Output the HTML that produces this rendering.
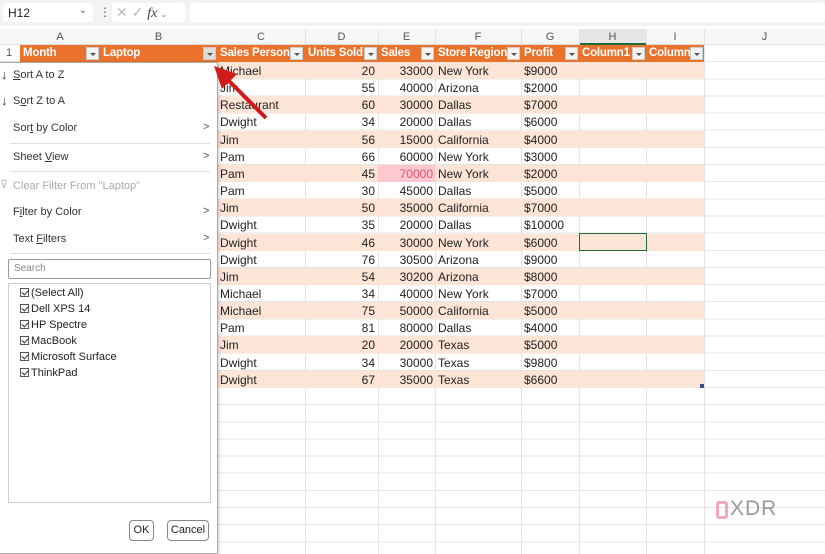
<!DOCTYPE html>
<html><head><meta charset="utf-8"><style>
*{margin:0;padding:0;box-sizing:border-box}
body{width:825px;height:554px;overflow:hidden;background:#fff;font-family:"Liberation Sans",sans-serif;font-size:12px;color:#222;position:relative}
.abs{position:absolute}
.grid{position:absolute;left:0;top:45px;width:825px;height:509px;
background-image:repeating-linear-gradient(to bottom,transparent 0,transparent 16.15px,#e3e3e3 16.15px,#e3e3e3 17.15px);}
.vl{position:absolute;top:29px;bottom:0;width:1px;background:#e3e3e3}
.colh{position:absolute;top:29px;height:16px;text-align:center;font-size:11px;color:#555;line-height:16px}
.cell{position:absolute;height:17px;line-height:18px;font-size:12px;white-space:nowrap;overflow:hidden}
.hd{position:absolute;top:45px;height:17px;line-height:17px;background:#e9722d;color:#fff;font-weight:bold;font-size:11.5px;padding-left:3px;white-space:nowrap;overflow:hidden;letter-spacing:-0.2px}
.dd{position:absolute;top:47px;width:13px;height:13px;background:#f4f4f4;border:1px solid #ccc}
.dd:after{content:"";position:absolute;left:3px;top:5px;border-left:3px solid transparent;border-right:3px solid transparent;border-top:3px solid #555}
.mi{position:absolute;left:13px;font-size:11px;color:#333}
.chev{position:absolute;left:203px;font-size:11px;color:#555}
.sep{position:absolute;left:10px;width:200px;height:1px;background:#ddd}
.cb{position:absolute;left:20px;font-size:11px;color:#222}
.cb i{display:inline-block;width:9px;height:9px;border:1px solid #555;margin-right:2px;vertical-align:-1px;position:relative}
.cb i:after{content:"";position:absolute;left:2px;top:0px;width:3px;height:5px;border-right:1.5px solid #222;border-bottom:1.5px solid #222;transform:rotate(45deg)}
</style></head><body>
<div class="abs" style="left:0;top:0;width:825px;height:26px;background:#f3f3f3"></div>
<div class="abs" style="left:3px;top:3px;width:90px;height:19px;background:#fff;border-radius:3px;font-size:12px;padding:3px 5px">H12<span style="position:absolute;right:6px;top:2px;color:#666;font-size:10px">&#8964;</span></div>
<div class="abs" style="left:99px;top:5px;color:#555;font-size:12px">&#8942;</div>
<div class="abs" style="left:112px;top:3px;width:73px;height:19px;background:#fff;border-radius:3px;color:#bbb;font-size:14px;padding:1px 4px">✕ ✓ <span style="color:#444;font-family:'Liberation Serif',serif;font-style:italic">fx</span><span style="font-size:9px;color:#888"> &#8964;</span></div>
<div class="abs" style="left:190px;top:3px;width:635px;height:19px;background:#fff;border-radius:3px"></div>
<div class="abs" style="left:0;top:26px;width:825px;height:3px;background:#fff"></div>

<div class="grid"></div>
<div class="abs" style="left:0;top:29px;width:825px;height:16px;background:#f7f7f7;border-bottom:1px solid #ddd"></div>
<div class="abs" style="left:579px;top:29px;width:67px;height:16px;background:#e6e6e6;border-bottom:2px solid #1e6b3c"></div>
<div class="vl" style="left:305px"></div><div class="vl" style="left:378px"></div><div class="vl" style="left:435px"></div><div class="vl" style="left:521px"></div><div class="vl" style="left:579px"></div><div class="vl" style="left:646px"></div><div class="vl" style="left:704px"></div>
<div class="colh" style="left:20px;width:80px">A</div><div class="colh" style="left:100px;width:117px">B</div><div class="colh" style="left:217px;width:88px">C</div><div class="colh" style="left:305px;width:73px">D</div><div class="colh" style="left:378px;width:57px">E</div><div class="colh" style="left:435px;width:86px">F</div><div class="colh" style="left:521px;width:58px">G</div><div class="colh" style="left:579px;width:67px">H</div><div class="colh" style="left:646px;width:58px">I</div><div class="colh" style="left:704px;width:121px">J</div>
<div class="abs" style="left:6px;top:47px;font-size:11px;color:#555">1</div>
<div class="hd" style="left:20px;width:684px"></div>
<div class="hd" style="left:20px">Month</div><div class="hd" style="left:100px">Laptop</div><div class="hd" style="left:217px">Sales Person</div><div class="hd" style="left:305px">Units Sold</div><div class="hd" style="left:378px">Sales</div><div class="hd" style="left:435px">Store Region</div><div class="hd" style="left:521px">Profit</div><div class="hd" style="left:579px">Column1</div><div class="hd" style="left:646px;width:46px">Column</div>
<div class="dd" style="left:86px"></div><div class="dd" style="left:203px;background:#ddd"></div><div class="dd" style="left:290px"></div><div class="dd" style="left:364px"></div><div class="dd" style="left:421px"></div><div class="dd" style="left:507px"></div><div class="dd" style="left:565px"></div><div class="dd" style="left:632px"></div><div class="dd" style="left:690px"></div>
<div id="rows"></div>
<script>
var d=[["Michael",20,33000,"New York","$9000"],["Jim",55,40000,"Arizona","$2000"],["Restaurant",60,30000,"Dallas","$7000"],["Dwight",34,20000,"Dallas","$6000"],["Jim",56,15000,"California","$4000"],["Pam",66,60000,"New York","$3000"],["Pam",45,70000,"New York","$2000"],["Pam",30,45000,"Dallas","$5000"],["Jim",50,35000,"California","$7000"],["Dwight",35,20000,"Dallas","$10000"],["Dwight",46,30000,"New York","$6000"],["Dwight",76,30500,"Arizona","$9000"],["Jim",54,30200,"Arizona","$8000"],["Michael",34,40000,"New York","$7000"],["Michael",75,50000,"California","$5000"],["Pam",81,80000,"Dallas","$4000"],["Jim",20,20000,"Texas","$5000"],["Dwight",34,30000,"Texas","$9800"],["Dwight",67,35000,"Texas","$6600"]];
var h="";
d.forEach(function(r,i){var y=(62+i*17.15).toFixed(1);
if(i%2==0)h+='<div class="cell" style="left:217px;top:'+y+'px;width:487px;background:#fce4d6"></div>';
if(i==6)h+='<div class="cell" style="left:378px;top:'+y+'px;width:57px;background:#ffc7ce"></div>';
h+='<div class="cell" style="left:220px;top:'+y+'px">'+r[0]+'</div>';
h+='<div class="cell" style="left:305px;top:'+y+'px;width:70px;text-align:right">'+r[1]+'</div>';
h+='<div class="cell" style="left:378px;top:'+y+'px;width:55px;text-align:right;'+(i==6?'color:#e0557a':'')+'">'+r[2]+'</div>';
h+='<div class="cell" style="left:438px;top:'+y+'px">'+r[3]+'</div>';
h+='<div class="cell" style="left:524px;top:'+y+'px">'+r[4]+'</div>';});
document.getElementById("rows").innerHTML=h;
</script>
<div class="abs" style="left:579px;top:233px;width:68px;height:18px;border:1px solid #1e6b3c"></div>
<div class="abs" style="left:0;top:62px;width:218px;height:492px;background:#fff;border:1px solid #aaa;border-left:none;box-shadow:1px 1px 3px rgba(0,0,0,.2)"></div>
<div class="abs" style="left:1px;top:67px;font-size:13px;color:#333">↓</div><div class="mi" style="top:69px"><u>S</u>ort A to Z</div>
<div class="abs" style="left:1px;top:93px;font-size:13px;color:#333">↓</div><div class="mi" style="top:95px">S<u>o</u>rt Z to A</div>
<div class="mi" style="top:122px">Sor<u>t</u> by Color</div><div class="chev" style="top:121px">&gt;</div>
<div class="sep" style="top:143px"></div>
<div class="mi" style="top:151px">Sheet <u>V</u>iew</div><div class="chev" style="top:150px">&gt;</div>
<div class="sep" style="top:171px"></div>
<div class="mi" style="top:180px;color:#aaa">Clear Filter From "Laptop"</div><div class="abs" style="left:0;top:178px;color:#bbb;font-size:11px">⊽</div>
<div class="mi" style="top:206px">F<u>i</u>lter by Color</div><div class="chev" style="top:205px">&gt;</div>
<div class="mi" style="top:233px">Text <u>F</u>ilters</div><div class="chev" style="top:232px">&gt;</div>
<div class="sep" style="top:253px"></div>
<div class="abs" style="left:8px;top:259px;width:203px;height:20px;border:1px solid #999;border-radius:2px;font-size:10px;color:#888;padding:3px 5px">Search</div>
<div class="abs" style="left:8px;top:283px;width:203px;height:220px;border:1px solid #ccc"></div>
<div class="cb" style="top:287px"><i></i>(Select All)</div>
<div class="cb" style="top:303px"><i></i>Dell XPS 14</div>
<div class="cb" style="top:319px"><i></i>HP Spectre</div>
<div class="cb" style="top:335px"><i></i>MacBook</div>
<div class="cb" style="top:351px"><i></i>Microsoft Surface</div>
<div class="cb" style="top:367px"><i></i>ThinkPad</div>
<div class="abs" style="left:129px;top:520px;width:25px;height:21px;border:1px solid #888;border-radius:4px;font-size:11px;text-align:center;line-height:19px">OK</div>
<div class="abs" style="left:167px;top:520px;width:42px;height:21px;border:1px solid #888;border-radius:4px;font-size:11px;text-align:center;line-height:19px">Cancel</div>
<div class="abs" style="left:700px;top:384px;width:4px;height:4px;background:#3a4a8a"></div>
<div class="abs" style="left:716px;top:501px;width:12px;height:18px;border:3px solid #f2a7bd;border-radius:3px"></div>
<div class="abs" style="left:730px;top:497px;font-size:21px;color:#999;letter-spacing:1px">XDR</div>
<svg class="abs" style="left:0;top:0" width="825" height="554"><line x1="266" y1="118" x2="228" y2="80" stroke="#d11a1a" stroke-width="4"/><polygon points="214,66 237,74 222,89" fill="#d11a1a"/></svg>
</body></html>
